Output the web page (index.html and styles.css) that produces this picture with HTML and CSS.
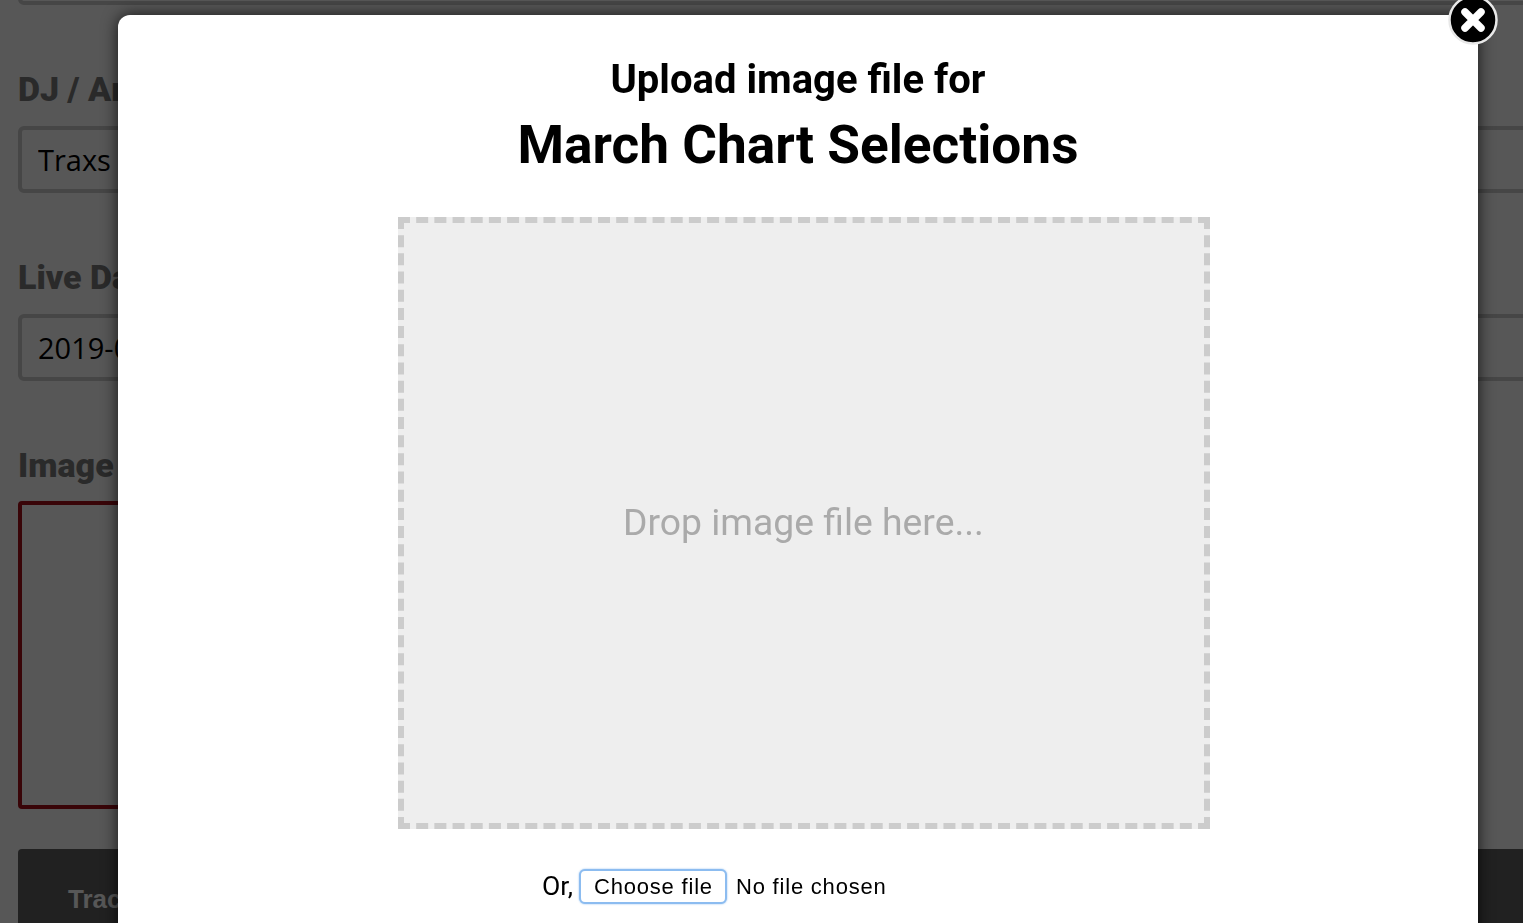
FILE: index.html
```html
<!DOCTYPE html>
<html>
<head>
    <meta charset="UTF-8">
    <meta name="viewport" content="width=device-width, initial-scale=1.0">
    <title>Upload image file</title>
    <link rel="stylesheet" href="styles.css">
</head>
<body>
    <form class="chart-form">
        <div class="field">
            <input class="text-input" type="text" value="">
        </div>
        <div class="field">
            <label class="field-label">DJ / Artist</label>
            <input class="text-input" type="text" value="Traxs Source">
        </div>
        <div class="field">
            <label class="field-label">Live Date</label>
            <input class="text-input" type="text" value="2019-03-01">
        </div>
        <div class="field field-image">
            <label class="field-label">Image</label>
            <div class="image-box"></div>
        </div>
        <div class="tracks-bar">Tracks</div>
    </form>

    <div class="overlay"></div>

    <div class="modal">
        <svg class="modal-close" viewBox="0 0 50 50" width="50" height="50">
            <circle cx="25" cy="25" r="23.5" fill="#000" stroke="#e8e8e8" stroke-width="2.5"/>
            <path d="M17 17 L33 33 M33 17 L17 33" stroke="#fff" stroke-width="7.5" stroke-linecap="round" fill="none"/>
        </svg>
        <h3 class="modal-subtitle">Upload image file for</h3>
        <h2 class="modal-title">March Chart Selections</h2>
        <div class="drop-zone">Drop image file here...</div>
        <div class="file-row">
            <span class="file-or">Or,</span>
            <button class="file-button" type="button">Choose file</button>
            <span class="file-status">No file chosen</span>
        </div>
    </div>
</body>
</html>
```

FILE: styles.css
```css
html, body {
    margin: 0;
    padding: 0;
    height: 100%;
    overflow: hidden;
    background: #fff;
}

.chart-form {
    width: 1700px;
    margin-top: -62px;
    padding-left: 18px;
    font-family: "Roboto", sans-serif;
}

.field {
    margin-bottom: 63px;
}

.field-image {
    margin-bottom: 40px;
}

.field-label {
    display: block;
    height: 40px;
    margin-bottom: 18px;
    padding-top: 1px;
    box-sizing: border-box;
    font-size: 34px;
    line-height: 40px;
    font-weight: 900;
    color: #7c7c7c;
}

.text-input {
    display: block;
    box-sizing: border-box;
    width: 100%;
    height: 67px;
    padding: 0 16px;
    border: 4px solid #ccc;
    border-radius: 6px;
    background: #fff;
    font-family: "Open Sans", sans-serif;
    font-size: 29px;
    color: #000;
}

.image-box {
    box-sizing: border-box;
    width: 800px;
    height: 308px;
    margin-top: -1px;
    border: 4px solid #a80f1a;
    border-radius: 4px;
}

.tracks-bar {
    height: 120px;
    padding: 35px 0 0 50px;
    border-radius: 4px;
    background: #606060;
    font-family: "Liberation Sans", sans-serif;
    font-size: 26px;
    font-weight: 700;
    color: #fff;
}

.overlay {
    position: fixed;
    top: 0;
    left: 0;
    right: 0;
    bottom: 0;
    background: rgba(0, 0, 0, 0.66);
}

.modal {
    position: absolute;
    top: 15px;
    left: 118px;
    width: 1360px;
    height: 960px;
    display: flex;
    flex-direction: column;
    align-items: center;
    background: #fff;
    border-radius: 12px 12px 0 0;
    box-shadow: 0 0 16px rgba(0, 0, 0, 0.75);
    font-family: "Roboto", sans-serif;
    color: #000;
}

.modal-close {
    position: absolute;
    top: -20px;
    right: -20px;
}

.modal-subtitle {
    margin: 41px 0 0;
    font-size: 40px;
    line-height: 48px;
    font-weight: 700;
}

.modal-title {
    margin: 10px 0 0;
    font-size: 53.2px;
    line-height: 62px;
    font-weight: 700;
}

.drop-zone {
    box-sizing: border-box;
    width: 812px;
    height: 612px;
    margin: 41px 0 0 11px;
    padding-bottom: 2px;
    display: flex;
    justify-content: center;
    align-items: center;
    border: 6px dashed #ccc;
    background: #eee;
    font-size: 37.3px;
    color: #aaa;
}

.file-row {
    display: flex;
    align-items: center;
    align-self: flex-start;
    margin: 40px 0 0 424px;
}

.file-or {
    margin-right: 6px;
    padding-bottom: 2px;
    font-size: 26.6px;
}

.file-button {
    box-sizing: border-box;
    width: 148px;
    height: 35px;
    padding: 1px 0 0 1px;
    border: 2px solid #8cbcf0;
    border-radius: 6px;
    box-shadow: 0 0 2px #8cbcf0;
    background: #fff;
    font-family: "Liberation Sans", sans-serif;
    font-size: 22px;
    letter-spacing: 0.8px;
    color: #000;
}

.file-status {
    margin-left: 9px;
    padding-top: 1px;
    font-family: "Liberation Sans", sans-serif;
    font-size: 22px;
    letter-spacing: 0.8px;
}
```
